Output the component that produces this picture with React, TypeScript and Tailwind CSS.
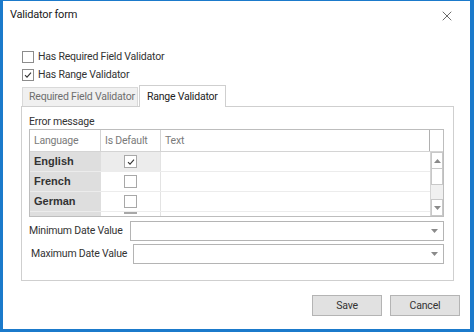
import { X } from 'lucide-react';

const font = { fontFamily: 'Roboto, "Liberation Sans", Arial, sans-serif' };

const Box = ({ checked = false, className = '' }: { checked?: boolean; className?: string }) => (
  <span className={`flex h-[12px] w-[12px] shrink-0 items-center justify-center border bg-white ${className}`}>
    {checked && (
      <svg width="8" height="8" viewBox="0 0 8 8">
        <path d="M1 4.2 L3 6.2 L7 1.6" fill="none" stroke="#333" strokeWidth="1.1" />
      </svg>
    )}
  </span>
);

const Arrow = ({ up = false }: { up?: boolean }) => (
  <svg width="7" height="4" viewBox="0 0 7 4">
    <path d={up ? 'M0 4 L3.5 0 L7 4 Z' : 'M0 0 L3.5 4 L7 0 Z'} fill="#8a8a8a" />
  </svg>
);

const rows = [
  { lang: 'English', checked: true, sel: true },
  { lang: 'French', checked: false, sel: false },
  { lang: 'German', checked: false, sel: false },
];

const DateField = ({ label, pl, w }: { label: string; pl: string; w: string }) => (
  <div className={`flex items-center ${pl}`}>
    <span className="w-[102px] whitespace-nowrap text-[10.5px] text-[#333]">{label}</span>
    <div className={`flex h-[20px] ${w} items-center justify-end border border-[#b4b4b4] bg-white pr-[5px]`}>
      <Arrow />
    </div>
  </div>
);

export default function App() {
  return (
    <div className="h-[332px] w-[474px] bg-white tracking-[-0.2px]" style={font}>
      <div className="flex h-full w-full flex-col border-b-[3px] border-l-[3px] border-r-[4px] border-t-[1px] border-[#1b7acb] bg-white">
        {/* title bar */}
        <div className="flex h-[29px] items-center justify-between pl-[7px] pr-[15px]">
          <span className="text-[11px] text-[#1a1a1a]">Validator form</span>
          <X size={16} strokeWidth={1.2} className="text-[#444]" />
        </div>

        {/* checkboxes */}
        <div className="mt-[21px] flex flex-col gap-[6px] pl-[19px]">
          <label className="flex h-[12px] items-center gap-[4px] whitespace-nowrap text-[10.5px] text-[#333]">
            <Box className="border-[#8c8c8c]" />
            Has Required Field Validator
          </label>
          <label className="flex h-[12px] items-center gap-[4px] whitespace-nowrap text-[10.5px] text-[#333]">
            <Box checked className="border-[#8c8c8c]" />
            Has Range Validator
          </label>
        </div>

        {/* tabs */}
        <div className="mt-[4px] flex items-end pl-[19px]">
          <div className="flex h-[19px] items-center whitespace-nowrap border border-b-0 border-[#d9d9d9] bg-[#f0f0f0] pl-[6px] pr-[2px] text-[10.5px] text-[#6e6e6e]">
            Required Field Validator
          </div>
          <div className="relative -mb-px ml-[1px] flex h-[22px] items-center whitespace-nowrap border border-b-0 border-[#cfcfcf] bg-white px-[7px] text-[10.5px] text-[#222]">
            Range Validator
          </div>
        </div>

        {/* tab panel */}
        <div className="ml-[18px] flex h-[175px] w-[433px] flex-col border border-[#cfcfcf] bg-white pl-[7px] pr-[9px]">
          <div className="mt-[8px] text-[10.5px] leading-[14px] text-[#333]">Error message</div>

          {/* grid */}
          <div className="flex h-[88px] shrink-0 flex-col overflow-hidden border border-[#bdbdbd]">
            <div className="flex h-[22px] shrink-0 border-b border-[#d4d4d4] text-[10.5px] text-[#7a7a7a]">
              <div className="flex w-[71px] items-center border-r border-[#d4d4d4] pl-[4px]">Language</div>
              <div className="flex w-[60px] items-center border-r border-[#d4d4d4] pl-[4px]">Is Default</div>
              <div className="flex w-[269px] items-center border-r border-[#b0b0b0] pl-[4px]">Text</div>
              <div className="flex-1" />
            </div>
            <div className="flex flex-1">
              <div className="flex w-[400px] flex-col">
                {rows.map((r) => (
                  <div key={r.lang} className="flex h-[20px] shrink-0 border-b border-[#ececec]">
                    <div
                      className="flex w-[71px] items-center bg-[#dedede] pl-[4px] text-[11px] font-bold tracking-normal text-[#333]"
                      style={{ fontFamily: '"Liberation Sans", Arial, sans-serif' }}
                    >
                      {r.lang}
                    </div>
                    <div className={`flex w-[60px] items-center justify-center border-r border-[#e3e3e3] ${r.sel ? 'bg-[#ececec]' : 'bg-white'}`}>
                      <Box checked={r.checked} className="h-[13px] w-[13px] border-[#a8a8a8]" />
                    </div>
                    <div className="flex-1 bg-white" />
                  </div>
                ))}
                <div className="flex flex-1">
                  <div className="w-[71px] bg-[#dedede]" />
                  <div className="flex w-[60px] justify-center border-r border-[#e3e3e3]">
                    <div className="h-[2px] w-[13px] bg-[#a8a8a8]" />
                  </div>
                </div>
              </div>
              {/* scrollbar */}
              <div className="flex w-[13px] flex-col border-l border-[#d4d4d4] bg-[#f0f0f0]">
                <div className="flex h-[17px] items-center justify-center border border-[#c8c8c8] bg-white">
                  <Arrow up />
                </div>
                <div className="h-[16px] border border-t-0 border-[#c8c8c8] bg-white" />
                <div className="flex-1" />
                <div className="flex h-[17px] items-center justify-center border border-[#c8c8c8] bg-white">
                  <Arrow />
                </div>
              </div>
            </div>
          </div>

          <div className="mt-[4px] flex flex-col gap-[3px]">
            <DateField label="Minimum Date Value" pl="pl-0" w="w-[316px]" />
            <DateField label="Maximum Date Value" pl="pl-[2px]" w="w-[312px]" />
          </div>
        </div>

        {/* buttons */}
        <div className="mt-[14px] flex justify-end gap-[8px] pr-[10px]">
          <button className="h-[21px] w-[70px] border border-[#b4b4b4] bg-[#e1e1e1] text-[10.5px] text-[#333]">Save</button>
          <button className="h-[21px] w-[70px] border border-[#b4b4b4] bg-[#e1e1e1] text-[10.5px] text-[#333]">Cancel</button>
        </div>
      </div>
    </div>
  );
}
